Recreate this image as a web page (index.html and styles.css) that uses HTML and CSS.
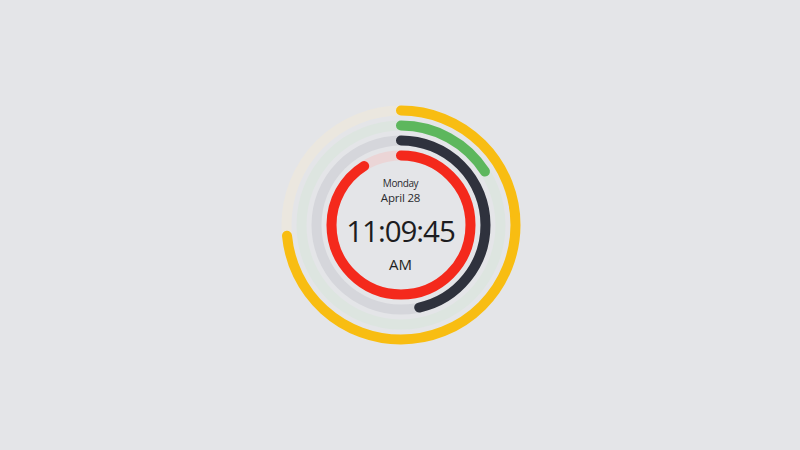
FILE: index.html
```html
<!DOCTYPE html>
<html lang="en">
<head>
<meta charset="utf-8">
<title>Ring Clock</title>
<link rel="stylesheet" href="styles.css">
</head>
<body>
<main class="stage">
  <div class="clock">
    <svg class="rings" viewBox="0 0 240 240" width="240" height="240" aria-hidden="true">
      <g transform="rotate(-90 120 120)" fill="none" stroke-width="10" stroke-linecap="round">
        <circle class="track track-sec" cx="120" cy="120" r="114.5"/>
        <circle class="track track-min" cx="120" cy="120" r="99.5"/>
        <circle class="track track-hour" cx="120" cy="120" r="84.5"/>
        <circle class="track track-day" cx="120" cy="120" r="69.5"/>
        <circle class="arc arc-sec" cx="120" cy="120" r="114.5" pathLength="360" stroke-dasharray="264.5 400"/>
        <circle class="arc arc-min" cx="120" cy="120" r="99.5" pathLength="360" stroke-dasharray="57.5 400"/>
        <circle class="arc arc-hour" cx="120" cy="120" r="84.5" pathLength="360" stroke-dasharray="167.5 400"/>
        <circle class="arc arc-day" cx="120" cy="120" r="69.5" pathLength="360" stroke-dasharray="328 400"/>
      </g>
    </svg>
    <div class="face">
      <div class="weekday">Monday</div>
      <div class="date">April 28</div>
      <div class="time">11:09:45</div>
      <div class="ampm">AM</div>
    </div>
  </div>
</main>
</body>
</html>
```
FILE: styles.css
```css
html, body {
  margin: 0;
  padding: 0;
}
body {
  background: #e4e5e8;
  font-family: "Open Sans", "Noto Sans", sans-serif;
  color: #1f1f22;
}
.stage {
  width: 800px;
  height: 450px;
  display: flex;
  align-items: center;
  justify-content: center;
}
.clock {
  display: grid;
  width: 240px;
  height: 240px;
  margin-left: 1px;
}
.rings, .face {
  grid-area: 1 / 1;
}
.rings {
  display: block;
}
.track-sec { stroke: #ebe7df; }
.track-min { stroke: #dde5e0; }
.track-hour { stroke: #d5d6db; }
.track-day { stroke: #ebd5d6; }
.arc-sec { stroke: #f8bd12; }
.arc-min { stroke: #5db75d; }
.arc-hour { stroke: #2f323d; }
.arc-day { stroke: #f4291c; }

.face {
  display: flex;
  flex-direction: column;
  align-items: center;
  justify-content: center;
  text-align: center;
}
.weekday {
  font-size: 10px;
  line-height: 14px;
  letter-spacing: -0.4px;
  color: #2a2a2e;
}
.date {
  font-size: 11.5px;
  line-height: 16px;
  letter-spacing: -0.2px;
  color: #2a2a2e;
}
.time {
  font-size: 29.5px;
  line-height: 50px;
  font-weight: 400;
  letter-spacing: -1px;
  color: #1c1c20;
}
.ampm {
  font-size: 15px;
  line-height: 17px;
  margin-bottom: 1px;
}
```
